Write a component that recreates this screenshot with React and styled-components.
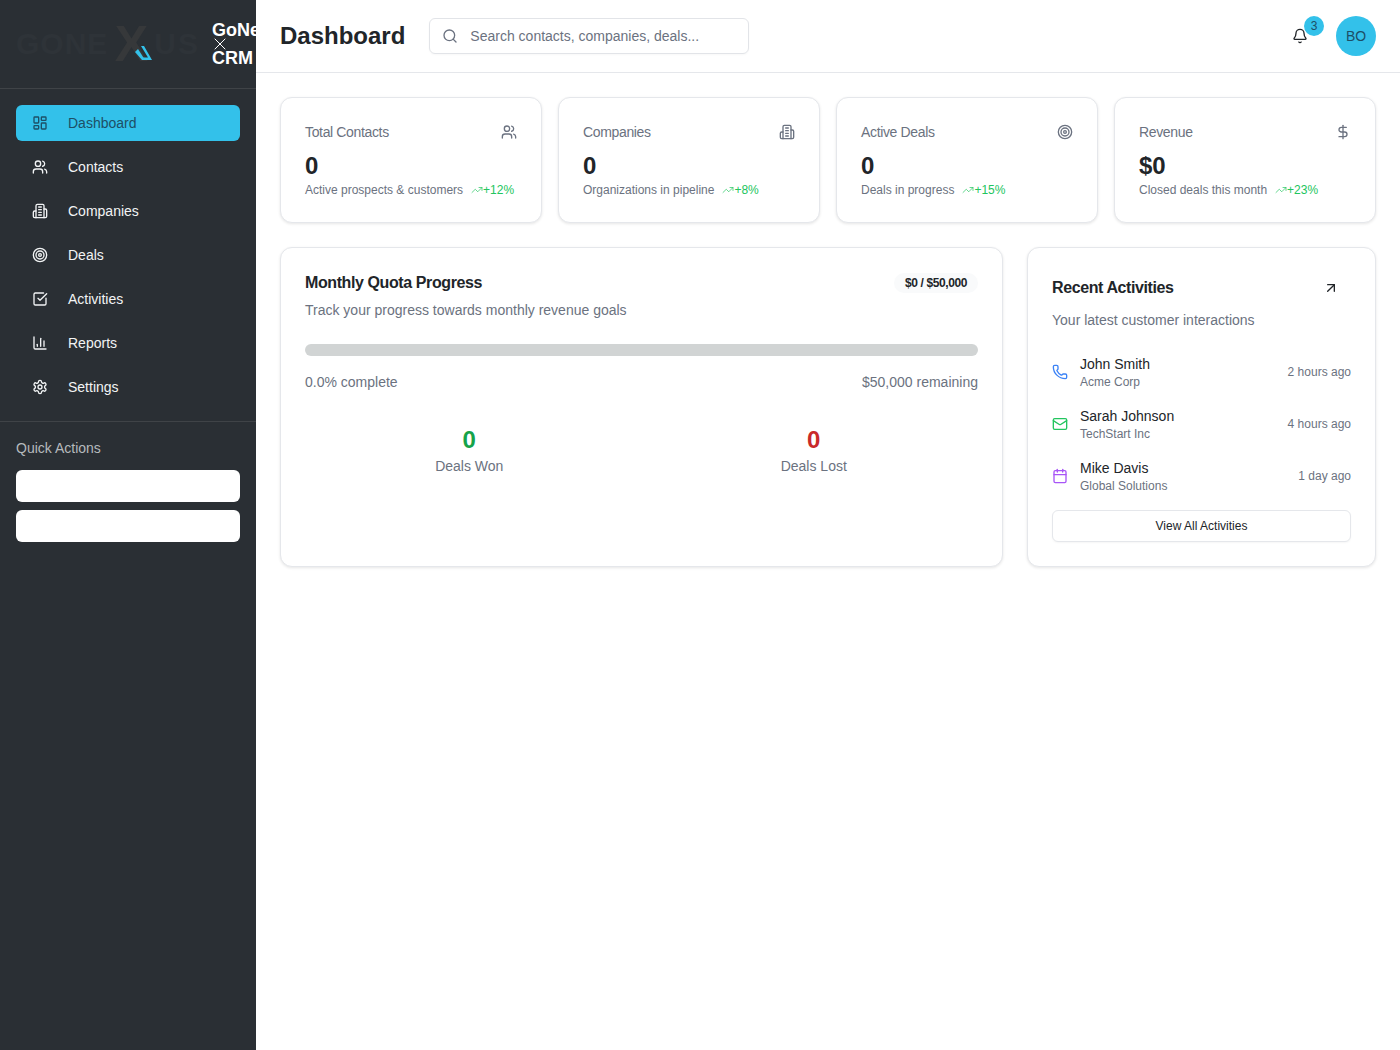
import React from "react"
import styled, { createGlobalStyle } from "styled-components"
import {
  ArrowUpRight, Bell, Calendar, ChartColumn, DollarSign, LayoutDashboard,
  Mail, Phone, Search, SquareCheckBig, Target, TrendingUp, Users, X,
} from "lucide-react"

const GlobalStyle = createGlobalStyle`
  * { box-sizing: border-box; }
  html, body { margin: 0; padding: 0; background: #fff; }
  body { font-family: "Liberation Sans", Arial, sans-serif; color: #212529; }
`

const Page = styled.div`
  display: flex;
  width: 1400px;
  height: 1050px;
  overflow: hidden;
`

const Sidebar = styled.aside`
  width: 256px;
  flex: none;
  background: #2a2f34;
  overflow: hidden;
`

const Brand = styled.div`
  display: flex;
  align-items: center;
  gap: 12px;
  height: 89px;
  padding: 0 0 1px 16px;
  border-bottom: 1px solid #3f4347;
  white-space: nowrap;
`

const LogoMark = styled.div`
  position: relative;
  display: flex;
  align-items: center;
  justify-content: space-between;
  width: 184px;
  height: 64px;
  flex: none;
  font-weight: 700;
  font-size: 30px;
  color: #2e3338;
`

const LogoLetters = styled.span`
  letter-spacing: ${(p) => p.$spacing}px;
`

const LogoCross = styled.span`
  font-size: 50px;
  line-height: 50px;
  color: #36383a;
`

const LogoWedge = styled.svg`
  position: absolute;
  left: 119px;
  top: 34px;
`

const BrandName = styled.div`
  width: 60px;
  flex: none;
  font-size: 18px;
  line-height: 14px;
  font-weight: 700;
  color: #fff;
`

const BrandLine = styled.div`
  height: 14px;
  display: flex;
  align-items: center;
`

const BrandCross = styled(X)`
  flex: none;
  margin-left: -2px;
`

const Nav = styled.nav`
  display: flex;
  flex-direction: column;
  gap: 8px;
  padding: 16px;
  border-bottom: 1px solid #3f4347;
`

const NavItem = styled.a`
  display: flex;
  align-items: center;
  gap: 20px;
  height: 36px;
  padding-left: 16px;
  border-radius: 6px;
  font-size: 14px;
  color: ${(p) => (p.$active ? "#1d4f66" : "#f2f4f5")};
  background: ${(p) => (p.$active ? "#33c1ea" : "transparent")};
`

const Quick = styled.div`
  padding: 16px;
`

const QuickTitle = styled.h3`
  margin: 0 0 12px;
  font-size: 14px;
  line-height: 20px;
  font-weight: 400;
  color: #b6babd;
`

const QuickButton = styled.button`
  display: block;
  width: 100%;
  height: 32px;
  margin-bottom: 8px;
  border: none;
  border-radius: 6px;
  background: #fff;
  color: #fff;
  font: 12px "Liberation Sans", Arial, sans-serif;
`

const Main = styled.main`
  flex: 1;
  min-width: 0;
`

const Header = styled.header`
  display: flex;
  align-items: center;
  height: 73px;
  padding: 0 24px;
  border-bottom: 1px solid #e5e7eb;
`

const PageTitle = styled.h1`
  margin: 0 24px 0 0;
  font-size: 24px;
  line-height: 32px;
  font-weight: 700;
`

const SearchBox = styled.div`
  display: flex;
  align-items: center;
  gap: 12px;
  width: 320px;
  height: 36px;
  padding-left: 12px;
  border: 1px solid #e2e4e8;
  border-radius: 6px;
  font-size: 14px;
  color: #6b7280;
  box-shadow: 0 1px 2px rgba(0, 0, 0, 0.03);
`

const HeaderRight = styled.div`
  display: flex;
  align-items: center;
  gap: 16px;
  margin-left: auto;
`

const BellButton = styled.div`
  position: relative;
  display: flex;
  align-items: center;
  justify-content: center;
  width: 40px;
  height: 40px;
`

const BellBadge = styled.span`
  position: absolute;
  top: 0;
  right: -4px;
  width: 20px;
  height: 20px;
  border-radius: 50%;
  background: #33c1ea;
  color: #1d4f66;
  font-size: 12px;
  line-height: 20px;
  text-align: center;
`

const Avatar = styled.div`
  width: 40px;
  height: 40px;
  border-radius: 50%;
  background: #33c1ea;
  color: #1d4f66;
  font-size: 14px;
  line-height: 40px;
  text-align: center;
`

const Content = styled.div`
  display: flex;
  flex-direction: column;
  gap: 24px;
  padding: 24px;
`

const StatGrid = styled.div`
  display: grid;
  grid-template-columns: repeat(4, 1fr);
  gap: 16px;
`

const Card = styled.section`
  background: #fff;
  border: 1px solid #e5e7eb;
  border-radius: 12px;
  box-shadow: 0 1px 3px rgba(0, 0, 0, 0.1);
`

const StatCard = styled(Card)`
  height: 126px;
  padding: 24px;
`

const StatTop = styled.div`
  display: flex;
  align-items: center;
  justify-content: space-between;
  height: 20px;
  font-size: 14px;
  letter-spacing: -0.35px;
  color: #6b7280;
`

const StatValue = styled.div`
  margin-top: 8px;
  font-size: 24px;
  line-height: 32px;
  font-weight: 700;
`

const StatNote = styled.div`
  display: flex;
  align-items: center;
  gap: 8px;
  font-size: 12px;
  line-height: 16px;
  color: #6b7280;
`

const Trend = styled.span`
  display: flex;
  align-items: center;
  color: #22c55e;
`

const Columns = styled.div`
  display: grid;
  grid-template-columns: 723px 349px;
  gap: 24px;
`

const QuotaCard = styled(Card)`
  height: 320px;
  padding: 23px 24px 24px;
`

const TitleRow = styled.div`
  display: flex;
  align-items: center;
  justify-content: space-between;
`

const CardTitle = styled.h2`
  margin: 0;
  font-size: 16px;
  line-height: 24px;
  font-weight: 700;
  letter-spacing: -0.4px;
`

const Amount = styled.span`
  padding: 2px 11px;
  border-radius: 999px;
  background: #f9fafb;
  font-size: 12px;
  line-height: 16px;
  font-weight: 700;
  letter-spacing: -0.4px;
`

const CardSub = styled.p`
  margin: ${(p) => p.$gap}px 0 0;
  font-size: 14px;
  line-height: 20px;
  color: #6b7280;
`

const Track = styled.div`
  height: 12px;
  margin-top: 24px;
  border-radius: 999px;
  background: #d1d4d4;
  overflow: hidden;
`

const ProgressMeta = styled.div`
  display: flex;
  justify-content: space-between;
  margin-top: 16px;
  font-size: 14px;
  line-height: 20px;
  color: #6b7280;
`

const Outcomes = styled.div`
  display: grid;
  grid-template-columns: 1fr 1fr;
  gap: 16px;
  margin-top: 32px;
  text-align: center;
`

const OutcomeValue = styled.div`
  font-size: 24px;
  line-height: 32px;
  font-weight: 700;
  color: ${(p) => p.$color};
`

const OutcomeLabel = styled.div`
  font-size: 14px;
  line-height: 20px;
  color: #6b7280;
`

const ActivityCard = styled(Card)`
  height: 320px;
  padding: 24px;
`

const ActivityHead = styled(TitleRow)`
  height: 32px;
  padding-right: 12px;
`

const ActivityList = styled.div`
  display: flex;
  flex-direction: column;
  gap: 16px;
  margin-top: 24px;
`

const ActivityRow = styled.div`
  display: flex;
  align-items: center;
  gap: 12px;
  height: 36px;
`

const ActivityBody = styled.div`
  flex: 1;
`

const ActivityName = styled.div`
  font-size: 14px;
  line-height: 20px;
`

const ActivityOrg = styled.div`
  font-size: 12px;
  line-height: 16px;
  color: #6b7280;
`

const ActivityTime = styled.div`
  font-size: 12px;
  color: #6b7280;
`

const ViewAll = styled.button`
  display: block;
  width: 100%;
  height: 32px;
  margin-top: 16px;
  border: 1px solid #e5e7eb;
  border-radius: 6px;
  background: #fff;
  color: #212529;
  font: 12px "Liberation Sans", Arial, sans-serif;
  box-shadow: 0 1px 2px rgba(0, 0, 0, 0.04);
`

const Line = styled.svg`
  flex: none;
  fill: none;
  stroke: currentColor;
  stroke-width: 2;
  stroke-linecap: round;
  stroke-linejoin: round;
`

// older lucide shapes, the installed ones were redrawn
const TallBuilding = ({ size = 16 }) => (
  <Line width={size} height={size} viewBox="0 0 24 24">
    <path d="M6 22V4a2 2 0 0 1 2-2h8a2 2 0 0 1 2 2v18Z" />
    <path d="M6 12H4a2 2 0 0 0-2 2v6a2 2 0 0 0 2 2h2" />
    <path d="M18 9h2a2 2 0 0 1 2 2v9a2 2 0 0 1-2 2h-2" />
    <path d="M10 6h4M10 10h4M10 14h4M10 18h4" />
  </Line>
)

const Gear = ({ size = 16 }) => (
  <Line width={size} height={size} viewBox="0 0 24 24">
    <path d="M12.22 2h-.44a2 2 0 0 0-2 2v.18a2 2 0 0 1-1 1.73l-.43.25a2 2 0 0 1-2 0l-.15-.08a2 2 0 0 0-2.73.73l-.22.38a2 2 0 0 0 .73 2.73l.15.1a2 2 0 0 1 1 1.72v.51a2 2 0 0 1-1 1.74l-.15.09a2 2 0 0 0-.73 2.73l.22.38a2 2 0 0 0 2.73.73l.15-.08a2 2 0 0 1 2 0l.43.25a2 2 0 0 1 1 1.73V20a2 2 0 0 0 2 2h.44a2 2 0 0 0 2-2v-.18a2 2 0 0 1 1-1.73l.43-.25a2 2 0 0 1 2 0l.15.08a2 2 0 0 0 2.73-.73l.22-.39a2 2 0 0 0-.73-2.73l-.15-.08a2 2 0 0 1-1-1.74v-.5a2 2 0 0 1 1-1.74l.15-.09a2 2 0 0 0 .73-2.73l-.22-.38a2 2 0 0 0-2.73-.73l-.15.08a2 2 0 0 1-2 0l-.43-.25a2 2 0 0 1-1-1.73V4a2 2 0 0 0-2-2z" />
    <circle cx="12" cy="12" r="3" />
  </Line>
)

const navItems = [
  { label: "Dashboard", icon: LayoutDashboard, active: true },
  { label: "Contacts", icon: Users },
  { label: "Companies", icon: TallBuilding },
  { label: "Deals", icon: Target },
  { label: "Activities", icon: SquareCheckBig },
  { label: "Reports", icon: ChartColumn },
  { label: "Settings", icon: Gear },
]

const stats = [
  { title: "Total Contacts", icon: Users, value: "0", note: "Active prospects & customers", trend: "+12%" },
  { title: "Companies", icon: TallBuilding, value: "0", note: "Organizations in pipeline", trend: "+8%" },
  { title: "Active Deals", icon: Target, value: "0", note: "Deals in progress", trend: "+15%" },
  { title: "Revenue", icon: DollarSign, value: "$0", note: "Closed deals this month", trend: "+23%" },
]

const activities = [
  { name: "John Smith", org: "Acme Corp", time: "2 hours ago", icon: Phone, color: "#3b82f6" },
  { name: "Sarah Johnson", org: "TechStart Inc", time: "4 hours ago", icon: Mail, color: "#22c55e" },
  { name: "Mike Davis", org: "Global Solutions", time: "1 day ago", icon: Calendar, color: "#a855f7" },
]

export default function App() {
  return (
    <Page>
      <GlobalStyle />
      <Sidebar>
        <Brand>
          <LogoMark>
            <LogoLetters $spacing={1}>GONE</LogoLetters>
            <LogoCross>X</LogoCross>
            <LogoLetters $spacing={2}>US</LogoLetters>
            <LogoWedge width="17" height="14" viewBox="0 0 17 14">
              <path d="M0 6 L3 3 L10 14 L7 14 Z" fill="#33c1ea" />
              <path d="M6 0 L9 0 L17 14 L9 14 L7.5 11.5 L13 11.5 Z" fill="#33c1ea" />
            </LogoWedge>
          </LogoMark>
          <BrandName>
            <BrandLine>GoNe</BrandLine>
            <BrandLine><BrandCross size={20} strokeWidth={1.2} /></BrandLine>
            <BrandLine>CRM</BrandLine>
          </BrandName>
        </Brand>
        <Nav>
          {navItems.map(({ label, icon: Icon, active }) => (
            <NavItem key={label} $active={active}>
              <Icon size={16} />
              {label}
            </NavItem>
          ))}
        </Nav>
        <Quick>
          <QuickTitle>Quick Actions</QuickTitle>
          <QuickButton>Add Contact</QuickButton>
          <QuickButton>Create Deal</QuickButton>
        </Quick>
      </Sidebar>
      <Main>
        <Header>
          <PageTitle>Dashboard</PageTitle>
          <SearchBox>
            <Search size={16} />
            Search contacts, companies, deals...
          </SearchBox>
          <HeaderRight>
            <BellButton>
              <Bell size={16} />
              <BellBadge>3</BellBadge>
            </BellButton>
            <Avatar>BO</Avatar>
          </HeaderRight>
        </Header>
        <Content>
          <StatGrid>
            {stats.map(({ title, icon: Icon, value, note, trend }) => (
              <StatCard key={title}>
                <StatTop>
                  {title}
                  <Icon size={16} />
                </StatTop>
                <StatValue>{value}</StatValue>
                <StatNote>
                  {note}
                  <Trend><TrendingUp size={12} strokeWidth={1.4} />{trend}</Trend>
                </StatNote>
              </StatCard>
            ))}
          </StatGrid>
          <Columns>
            <QuotaCard>
              <TitleRow>
                <CardTitle>Monthly Quota Progress</CardTitle>
                <Amount>$0 / $50,000</Amount>
              </TitleRow>
              <CardSub $gap={5}>Track your progress towards monthly revenue goals</CardSub>
              <Track />
              <ProgressMeta>
                <span>0.0% complete</span>
                <span>$50,000 remaining</span>
              </ProgressMeta>
              <Outcomes>
                <div>
                  <OutcomeValue $color="#16a34a">0</OutcomeValue>
                  <OutcomeLabel>Deals Won</OutcomeLabel>
                </div>
                <div>
                  <OutcomeValue $color="#c92a2a">0</OutcomeValue>
                  <OutcomeLabel>Deals Lost</OutcomeLabel>
                </div>
              </Outcomes>
            </QuotaCard>
            <ActivityCard>
              <ActivityHead>
                <CardTitle>Recent Activities</CardTitle>
                <ArrowUpRight size={16} />
              </ActivityHead>
              <CardSub $gap={6}>Your latest customer interactions</CardSub>
              <ActivityList>
                {activities.map(({ name, org, time, icon: Icon, color }) => (
                  <ActivityRow key={name}>
                    <Icon size={16} color={color} />
                    <ActivityBody>
                      <ActivityName>{name}</ActivityName>
                      <ActivityOrg>{org}</ActivityOrg>
                    </ActivityBody>
                    <ActivityTime>{time}</ActivityTime>
                  </ActivityRow>
                ))}
              </ActivityList>
              <ViewAll>View All Activities</ViewAll>
            </ActivityCard>
          </Columns>
        </Content>
      </Main>
    </Page>
  )
}
